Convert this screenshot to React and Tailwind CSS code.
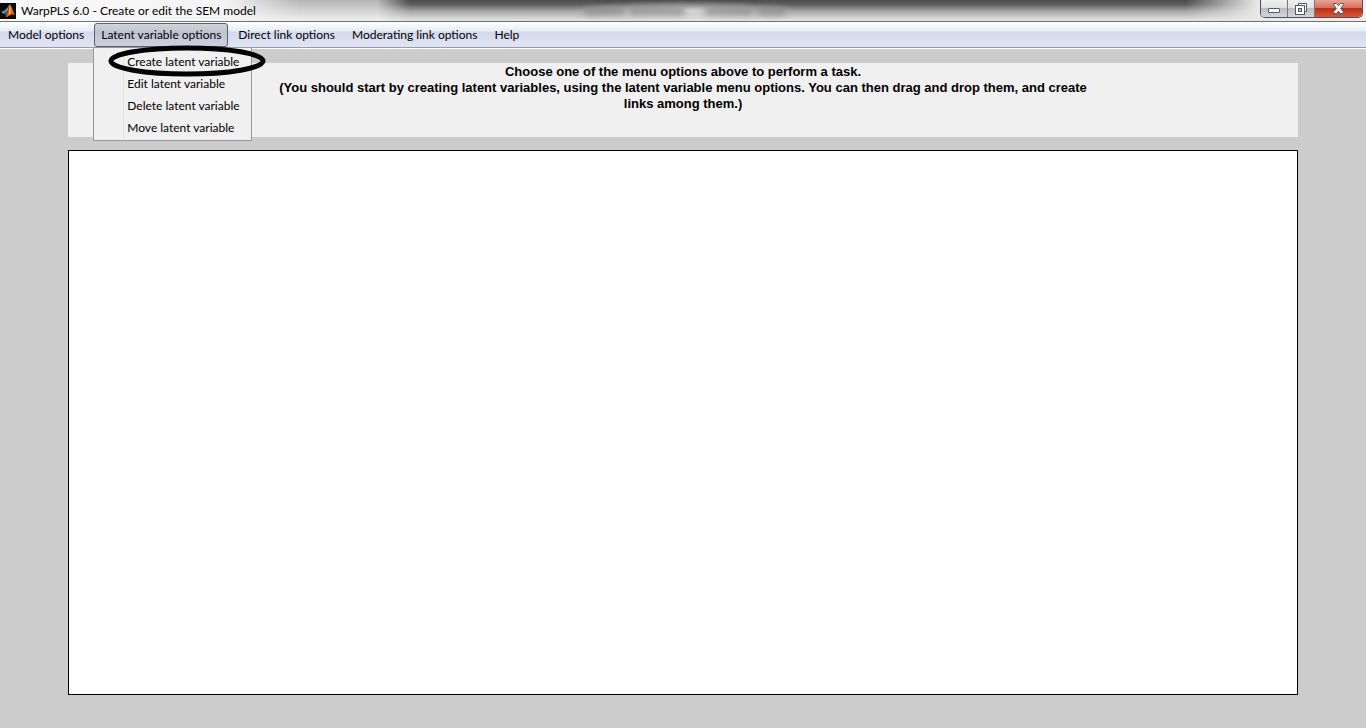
import { useState } from 'react';

const menus = [
  { label: 'Model options' },
  {
    label: 'Latent variable options',
    items: [
      'Create latent variable',
      'Edit latent variable',
      'Delete latent variable',
      'Move latent variable',
    ],
  },
  { label: 'Direct link options' },
  { label: 'Moderating link options' },
  { label: 'Help' },
];

const MatlabIcon = () => (
  <svg width="16" height="16" viewBox="0 0 16 16" aria-hidden="true" className="shrink-0">
    <rect width="16" height="16" fill="#0a0a0a" />
    <path d="M1 9 L5 7 L7 9 L4 11 Z" fill="#3f8fb5" />
    <path d="M5 7 C7 6 8 3 10 1 L7 9 Z" fill="#5fb4cf" />
    <path d="M4 11 L7 9 L10 1 L9 9 L6 14 C6 12 5 11 4 11 Z" fill="#a02c12" />
    <path d="M10 1 C12 4 13 9 15 12 C12 10 10 12 7 14 L6 14 C8 11 9 5 10 1 Z" fill="#e8691c" />
    <path d="M10 2 L11 8 L9 12 C9 8 9 5 10 2 Z" fill="#f9b04a" />
  </svg>
);

const WindowControls = () => (
  <div className="flex h-[18px] overflow-hidden rounded-b-[5px] border border-t-0 border-[#4f5056] mr-[3px]">
    <button
      type="button"
      aria-label="Minimize"
      className="flex w-[27px] items-center justify-center border-r border-[#77787e] bg-[linear-gradient(#efefef_0%,#e2e2e2_45%,#bcbcbe_48%,#d4d4de_100%)]"
    >
      <svg width="13" height="6" viewBox="0 0 13 6" className="mt-1">
        <rect x="0.5" y="0.5" width="11" height="4" rx="0.5" fill="#fff" stroke="#535568" />
      </svg>
    </button>
    <button
      type="button"
      aria-label="Restore"
      className="flex w-[27px] items-center justify-center border-r border-[#77787e] bg-[linear-gradient(#efefef_0%,#e2e2e2_45%,#bcbcbe_48%,#d4d4de_100%)]"
    >
      <svg width="13" height="12" viewBox="0 0 13 12">
        <path d="M3.5 2.5 V0.5 H11.5 V8.5 H9.5" fill="#fff" stroke="#535568" />
        <rect x="0.5" y="2.5" width="9" height="9" fill="#fff" stroke="#535568" />
        <rect x="3.5" y="5.5" width="3" height="3" fill="#c4c4cc" stroke="#535568" />
      </svg>
    </button>
    <button
      type="button"
      aria-label="Close"
      className="flex w-[47px] items-center justify-center bg-[linear-gradient(#e8a597_0%,#d8705c_45%,#bd2b12_48%,#d5573c_100%)]"
    >
      <svg width="13" height="11" viewBox="0 0 13 11">
        <path
          d="M1.5 0.5 H4.5 L6.5 2.8 L8.5 0.5 H11.5 V1.5 L8.6 5.5 L11.5 9 V10.5 H8.5 L6.5 8.2 L4.5 10.5 H1.5 V9 L4.4 5.5 L1.5 1.5 Z"
          fill="#fff"
          stroke="#535568"
        />
      </svg>
    </button>
  </div>
);

// Shapes of the window behind, seen through the glass title bar
const GlassSmudges = () => (
  <div
    aria-hidden="true"
    className="absolute inset-y-0 left-[570px] flex w-[230px] items-center justify-center gap-1 bg-[radial-gradient(closest-side,rgba(255,255,255,0.55),transparent)]"
  >
    <div className="h-2 w-10 bg-[#8a8a8a]/80 blur-[3px]" />
    <div className="h-2 w-14 bg-[#8a8a8a]/80 blur-[3px]" />
    <div className="ml-4 h-2 w-12 bg-[#8a8a8a]/80 blur-[3px]" />
    <div className="h-2 w-7 bg-[#8a8a8a]/80 blur-[3px]" />
  </div>
);

const TitleBar = () => (
  <header className="relative flex h-[22px] items-start justify-between overflow-hidden border-b border-[#707070] bg-[linear-gradient(#4c4c4c_0%,#5c5c5c_20%,#a8a8a8_55%,#e6e6e6_100%)]">
    <GlassSmudges />
    <div className="absolute inset-y-0 left-0 w-[410px] bg-[linear-gradient(#b4b4b4,#f0f0f0)] [mask-image:linear-gradient(90deg,#000_92%,transparent)]" />
    <div className="absolute inset-y-0 left-0 w-[300px] bg-[linear-gradient(90deg,#f8f8f8_0%,#f4f4f4_75%,transparent_100%)]" />
    <div className="absolute inset-y-0 right-0 w-[180px] bg-[linear-gradient(270deg,#f0f0f0_0%,#e8e8e8_60%,transparent_100%)]" />
    <div className="relative flex items-center gap-[5px] pt-[3px]">
      <MatlabIcon />
      <h1 className="text-[12px] leading-4">WarpPLS 6.0 - Create or edit the SEM model</h1>
    </div>
    <div className="relative">
      <WindowControls />
    </div>
  </header>
);

const DropDown = ({ items }) => (
  <div className="absolute left-0 top-full z-10 w-[159px] border border-[#979797] bg-[#f0f0f0] pb-px pt-[3px]">
    <ul role="menu" className="ml-[29px] border-l border-[#e2e3e3]">
      {items.map((item) => (
        <li key={item} role="none">
          <button
            type="button"
            role="menuitem"
            className="block h-[22px] whitespace-nowrap pl-[3px] text-left text-[12px] leading-[22px]"
          >
            {item}
          </button>
        </li>
      ))}
    </ul>
    <svg
      width="158"
      height="32"
      viewBox="0 0 158 32"
      aria-hidden="true"
      className="pointer-events-none absolute left-[14px] -top-[3px]"
    >
      <ellipse cx="79" cy="16" rx="76" ry="13" fill="none" stroke="#000" strokeWidth="5" />
    </svg>
  </div>
);

const MenuBar = () => {
  const [open, setOpen] = useState('Latent variable options');

  return (
    <nav className="flex h-[26px] gap-px border-b border-[#9a9ba5] bg-[linear-gradient(#ffffff_0%,#e6ecf5_36%,#d3d9eb_40%,#e0e5f6_100%)]">
      {menus.map(({ label, items }) => (
        <div key={label} className="relative pt-px">
          <button
            type="button"
            onClick={() => setOpen(open === label ? null : label)}
            className={
              open === label
                ? 'mx-px block h-6 rounded-[3px] border border-[#5b5f6b] bg-[linear-gradient(#d2d4da,#bfc3d0_40%,#ccd0e0)] px-[6px] text-[12px] leading-[22px]'
                : 'block h-6 border border-transparent px-[7px] text-[12px] leading-[22px]'
            }
          >
            {label}
          </button>
          {open === label && items && <DropDown items={items} />}
        </div>
      ))}
    </nav>
  );
};

const App = () => (
  <div className="flex min-h-screen flex-col bg-[#cccccc] font-['Lato',sans-serif] text-black">
    <TitleBar />
    <MenuBar />
    <main className="flex flex-1 flex-col border-t border-white px-[5%] pb-[33px] pt-[14px]">
      <div className="h-[74px] bg-[#f0f0f0] pt-px font-['Liberation_Sans',Arial,sans-serif] text-[13px] font-bold leading-4 text-center">
        <p>Choose one of the menu options above to perform a task.</p>
        <p className="mx-auto max-w-[836px]">
          (You should start by creating latent variables, using the latent variable menu options. You
          can then drag and drop them, and create links among them.)
        </p>
      </div>
      <section aria-label="Model canvas" className="mt-[13px] flex-1 border border-black bg-white" />
    </main>
  </div>
);

export default App;
